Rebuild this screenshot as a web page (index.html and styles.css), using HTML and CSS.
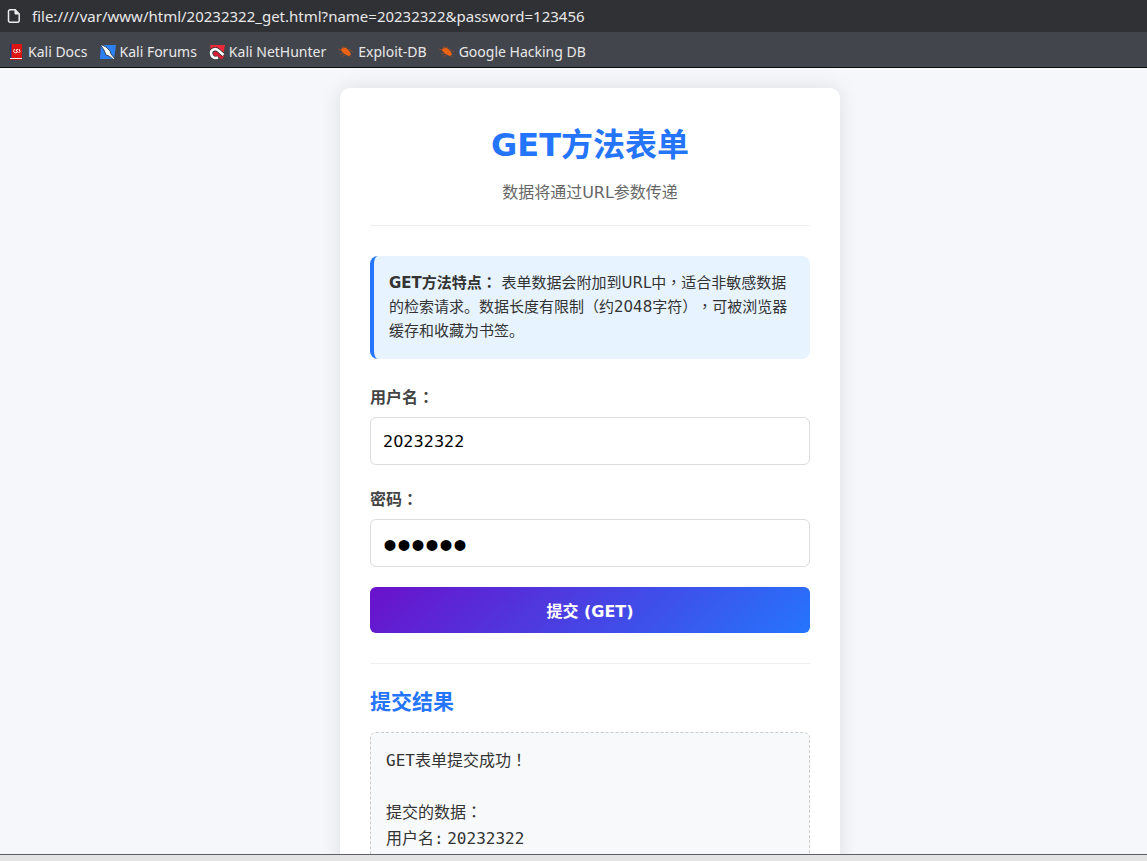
FILE: index.html
```html
<!DOCTYPE html>
<html lang="zh-CN">
<head>
<meta charset="utf-8">
<title>GET方法表单</title>
<link rel="stylesheet" href="styles.css">
</head>
<body>
<header class="browser">
  <div class="address">
    <svg class="page-icon" viewBox="0 0 14 16" aria-hidden="true"><path d="M3 1.8h5.2L12.2 6v6.7a1.5 1.5 0 0 1-1.5 1.5H3a1.5 1.5 0 0 1-1.5-1.5V3.3A1.5 1.5 0 0 1 3 1.8z" fill="none" stroke="#eee" stroke-width="1.5"/><path d="M8 1.8V6h4.2" fill="#eee" stroke="#eee"/></svg>
    <span>file:////var/www/html/20232322_get.html?name=20232322&amp;password=123456</span>
  </div>
  <nav class="bookmarks">
    <a href="#"><svg class="icon" viewBox="0 0 16 16" aria-hidden="true"><path d="M2 0h2v15H2z" fill="#17388c"/><path d="M3.500 0H14v14H3.500z" fill="#dc1414"/><path d="M2 14h12v1H2z" fill="#eee"/><path d="M2 15h12v1H2z" fill="#b01717"/><path d="M6.500 5 5.500 7.500 7.500 9M11 5l1 2.500L10.500 9M10 5.500 8 6l1.500 2-2 .8" fill="none" stroke="#fff" stroke-width="1"/></svg>Kali Docs</a>
    <a href="#"><svg class="icon" viewBox="0 0 16 16" aria-hidden="true"><path d="M1 1h15l-2 14H0z" fill="#2b80f4"/><path d="M0 0 6 3l4 4 1 3 4 5-1 1-5-4-3-1-2-5z" fill="#fff" stroke="#252a34" stroke-width=".8"/></svg>Kali Forums</a>
    <a href="#"><svg class="icon" viewBox="0 0 16 16" aria-hidden="true"><path d="M1 1h15l-2 11L8 6H2z" fill="#ed2939"/><path d="M14 14 8 9.500c-2-1-3 1-1.500 2l2 1.500" fill="none" stroke="#d72235" stroke-width="4"/><path d="M14.500 11 9.500 6.500C6 3.500 1.500 6 2 9.500s3.500 5.500 7 4" fill="none" stroke="#272a30" stroke-width="4"/><path d="M14.500 11 9.500 6.500C6 3.500 1.500 6 2 9.500s3.500 5.500 7 4" fill="none" stroke="#fff" stroke-width="2.600"/></svg>Kali NetHunter</a>
    <a href="#"><svg class="icon" viewBox="0 0 16 16" aria-hidden="true"><use href="#bug"/></svg>Exploit-DB</a>
    <a href="#"><svg class="icon" viewBox="0 0 16 16" aria-hidden="true"><g id="bug"><path d="M2.500 6 5 3.500l3.500.5L12 8l1 3-2.500 1-4.500-2.500z" fill="#f06312"/><path d="m0 5 4 1M4 2l2 3M8 2.500l1 3M11 5l2 2 2.500 1M2 10l4-1M4 12.500l4-2M11 11l2 2" fill="none" stroke="#a84c25" stroke-width=".7"/></g></svg>Google Hacking DB</a>
  </nav>
</header>
<div class="viewport">
  <main class="card">
    <div class="card-head">
      <h1>GET方法表单</h1>
      <p>数据将通过URL参数传递</p>
    </div>
    <p class="info"><strong>GET方法特点<span class="mid" lang="zh-TW">：</span></strong> 表单数据会附加到URL中<span class="mid" lang="zh-TW">，</span>适合非敏感数据的检索请求。数据长度有限制（约2048字符）<span class="mid" lang="zh-TW">，</span>可被浏览器缓存和收藏为书签。</p>
    <form>
      <div class="field">
        <label for="name">用户名<span class="mid" lang="zh-TW">：</span></label>
        <input id="name" type="text" name="name" value="20232322">
      </div>
      <div class="field">
        <label for="password">密码<span class="mid" lang="zh-TW">：</span></label>
        <input id="password" type="password" name="password" value="123456">
      </div>
      <button type="submit">提交 (GET)</button>
    </form>
    <section class="result">
      <h2>提交结果</h2>
      <pre>GET表单提交成功<span class="mid" lang="zh-TW">！</span>

提交的数据<span class="mid" lang="zh-TW">：</span>
用户名:<span class="thin"> </span>20232322</pre>
    </section>
  </main>
</div>
<footer class="window-edge"></footer>
</body>
</html>
```

FILE: styles.css
```css
* {
  box-sizing: border-box;
  margin: 0;
  padding: 0;
}

body {
  display: flex;
  flex-direction: column;
  height: 100vh;
  overflow: hidden;
  background: #f5f7fa;
  color: #333;
  font: 16px/26px "DejaVu Sans", "Noto Sans CJK SC", sans-serif;
  text-spacing-trim: space-all;
}

.browser {
  flex: none;
  border-bottom: 1px solid #0c0c0d;
  background: #43454c;
  color: #e8e8e8;
  font: 14px/20px "Noto Sans", sans-serif;
}

.address {
  display: flex;
  align-items: center;
  gap: 11px;
  height: 32px;
  padding: 0 7px;
  background: #303135;
  font-size: 15px;
}

.page-icon {
  width: 14px;
  height: 16px;
}

.bookmarks {
  display: flex;
  align-items: center;
  gap: 12px;
  height: 35px;
  padding: 4px 8px 0;
}

.bookmarks a {
  display: flex;
  align-items: center;
  gap: 4px;
  color: inherit;
  text-decoration: none;
}

.icon {
  width: 16px;
  height: 16px;
}

.viewport {
  flex: 1;
  min-height: 0;
  overflow: hidden;
  padding: 20px 0 0 33px;
  background: #f5f7fa;
}

.card {
  max-width: 500px;
  min-height: 100%;
  margin: 0 auto;
  padding: 30px;
  border-radius: 10px;
  background: #fff;
  box-shadow: 0 0 20px rgba(0, 0, 0, 0.1);
}

.card-head {
  margin-bottom: 30px;
  padding-bottom: 19px;
  border-bottom: 1px solid #eee;
  text-align: center;
}

h1 {
  margin-bottom: 8px;
  color: #2575fc;
  font-size: 32px;
  line-height: 54px;
}

.card-head p {
  color: #666;
}

.mid {
  font-family: "Noto Sans CJK TC", sans-serif;
  line-height: 1;
}

.thin {
  font-family: "Noto Sans CJK SC", sans-serif;
  line-height: 1;
}

.info {
  margin-bottom: 24px;
  padding: 15px 12px 16px 15px;
  border-left: 4px solid #2575fc;
  border-radius: 8px;
  background: #e7f3ff;
  font-size: 15px;
  line-height: 24px;
}

.field {
  margin-bottom: 20px;
}

label {
  display: block;
  margin-bottom: 8px;
  color: #444;
  font-weight: 600;
}

input {
  display: block;
  width: 100%;
  height: 48px;
  padding: 0 12px;
  border: 1px solid #ddd;
  border-radius: 6px;
  background: #fff;
  color: #000;
  font: 16px "DejaVu Sans", sans-serif;
}

label,
label .mid {
  font-family: "Noto Sans CJK SC", sans-serif;
}

label .mid {
  font-family: "Noto Sans CJK TC", sans-serif;
}

input[type="password"] {
  padding-top: 4px;
  font: 40px/44px "Liberation Sans", sans-serif;
}

button {
  display: block;
  width: 100%;
  height: 46px;
  border: 0;
  border-radius: 6px;
  background: linear-gradient(135deg, #6a11cb 0%, #2575fc 100%);
  color: #fff;
  font: bold 16px "DejaVu Sans", "Noto Sans CJK SC", sans-serif;
}

.result {
  margin-top: 30px;
  padding-top: 20px;
  border-top: 1px solid #eee;
}

h2 {
  margin-bottom: 12px;
  color: #2575fc;
  font-size: 21px;
  line-height: 36px;
}

pre {
  min-height: 160px;
  padding: 15px;
  border: 1px dashed #ccc;
  border-radius: 6px;
  background: #f8f9fa;
  font: 16px/26px "DejaVu Sans Mono", "Noto Sans CJK SC", monospace;
}

.window-edge {
  flex: none;
  height: 7px;
  border-top: 1px solid #5d5f65;
  background: #e4e4e4;
}
```
